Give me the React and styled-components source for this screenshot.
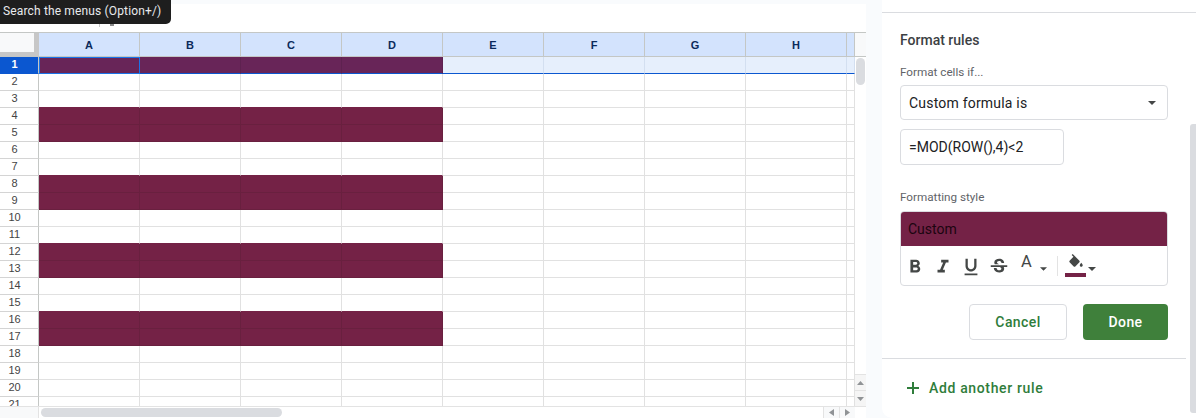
import React from "react";
import styled, { createGlobalStyle } from "styled-components";

const Global = createGlobalStyle`
  html, body { margin: 0; padding: 0; width: 1196px; height: 418px; overflow: hidden; background: #f9fbfd; }
  * { box-sizing: border-box; }
`;

const Page = styled.div`
  position: relative;
  display: flex;
  gap: 16px;
  width: 1196px;
  height: 418px;
  overflow: hidden;
  background: #f9fbfd;
  font-family: Roboto, "Liberation Sans", sans-serif;
`;

const Tooltip = styled.div`
  position: absolute;
  left: 0;
  top: 0;
  width: 171px;
  height: 24px;
  padding-left: 3px;
  background: #1e1e1e;
  border-radius: 0 0 5px 0;
  color: #e8eaed;
  font-size: 12px;
  letter-spacing: 0.15px;
  line-height: 23px;
  white-space: nowrap;
  z-index: 2;
`;

const Sheet = styled.div`
  width: 866px;
  height: 418px;
  padding-top: 4px;
  display: flex;
  flex-direction: column;
`;

const TopGap = styled.div`
  height: 28px;
  flex: none;
  display: flex;
  align-items: flex-end;
  padding: 0 0 5px 99px;
  background: #fff;
`;

const ToolbarDivider = styled.div`
  width: 1px;
  height: 22px;
  background: #c7c7c7;
`;

const ToolbarDot = styled.div`
  width: 4px;
  height: 2px;
  margin: 0 0 1px 10px;
  background: #8a8a8a;
`;

const GridWrap = styled.div`
  display: flex;
  height: 374px;
  flex: none;
  background: #fff;
`;

const Grid = styled.div`
  width: 855px;
  height: 374px;
  overflow: hidden;
  flex: none;
  font-family: "Liberation Sans", Arial, sans-serif;
`;

const HeaderRow = styled.div`
  display: flex;
  height: 25px;
  border-top: 1px solid #c4c7c5;
  border-bottom: 1px solid #c4c7c5;
`;

const Corner = styled.div`
  width: 39px;
  flex: none;
  background: #f8f9fa;
  border-right: 5px solid #c7c7c7;
  border-bottom: 4px solid #c7c7c7;
`;

const ColHead = styled.div`
  width: 101px;
  flex: none;
  display: flex;
  align-items: center;
  justify-content: center;
  background: #d3e3fd;
  border-right: 1px solid #c4c7c5;
  color: #0b2a5b;
  font-size: 11px;
  font-weight: 700;
`;

const ColEnd = styled.div`
  width: 8px;
  flex: none;
  background: #d3e3fd;
  border-right: 1px solid #c4c7c5;
`;

const Row = styled.div`
  display: flex;
  height: 17px;
`;

const RowHead = styled.div`
  width: 39px;
  flex: none;
  display: flex;
  align-items: center;
  justify-content: center;
  padding: 0 9px 2px 0;
  background: ${(p) => (p.$active ? "#0b57d0" : "#fff")};
  color: ${(p) => (p.$active ? "#fff" : "#444")};
  font-size: 11px;
  font-weight: ${(p) => (p.$active ? 700 : 400)};
  border-bottom: 1px solid ${(p) => (p.$active ? "#0b57d0" : "#d4d4d4")};
  border-right: 1px solid #c4c7c5;
`;

const Cell = styled.div`
  position: relative;
  width: ${(p) => p.$w || 101}px;
  flex: none;
  background: ${(p) => p.$bg};
  border-right: 1px solid ${(p) => p.$line};
  border-bottom: 1px solid ${(p) => p.$under};
`;

const SelectedOutline = styled.div`
  position: absolute;
  inset: 0 -1px -1px 0;
  border: 1.5px solid #1a73e8;
  pointer-events: none;
`;

const VScroll = styled.div`
  width: 11px;
  flex: none;
  background: #fff;
  display: flex;
  flex-direction: column;
  align-items: center;
`;

const VCap = styled.div`
  width: 100%;
  height: 25px;
  flex: none;
  background: #f8f9fa;
  border-top: 1px solid #c4c7c5;
  border-bottom: 1px solid #c4c7c5;
`;

const VThumb = styled.div`
  width: 9px;
  height: 27px;
  margin-top: 1px;
  border-radius: 5px;
  background: #dadce0;
  flex: none;
`;

const VArrows = styled.div`
  margin-top: auto;
  display: flex;
  flex-direction: column;
  background: #f5f5f5;
`;

const ArrowBtn = styled.div`
  width: ${(p) => p.$w || 11}px;
  height: ${(p) => p.$h || 16}px;
  display: flex;
  align-items: center;
  justify-content: center;
  border-top: ${(p) => (p.$top ? "1px solid #e3e3e3" : "0")};
  border-left: ${(p) => (p.$left ? "1px solid #e3e3e3" : "0")};
`;

const HScroll = styled.div`
  height: 12px;
  flex: none;
  display: flex;
  background: #fff;
  border-top: 1px solid #e3e3e3;
`;

const HCorner = styled.div`
  width: 39px;
  flex: none;
  background: #f8f9fa;
  border-right: 1px solid #e3e3e3;
`;

const HTrack = styled.div`
  flex: 1;
  padding: 1px 2px;
`;

const HThumb = styled.div`
  width: 241px;
  height: 9px;
  border-radius: 5px;
  background: #dadce0;
`;

const HArrows = styled.div`
  display: flex;
  margin-right: 11px;
  background: #f8f9fa;
`;

const Panel = styled.aside`
  position: relative;
  width: 314px;
  height: 418px;
  flex: none;
  background: #fff;
  border-radius: 0 0 0 10px;
  color: #3c4043;
`;

const PanelTopLine = styled.div`
  height: 13px;
  border-bottom: 1px solid #dadce0;
`;

const PanelBody = styled.div`
  padding: 19px 28px 0 18px;
  display: flex;
  flex-direction: column;
`;

const Heading = styled.div`
  font-size: 14px;
  line-height: 16px;
  font-weight: 500;
  color: #3c4043;
`;

const Label = styled.div`
  margin-top: ${(p) => p.$mt}px;
  font-size: 11.7px;
  line-height: 14px;
  color: #5f6368;
`;

const SelectBox = styled.div`
  margin-top: 6px;
  width: 268px;
  height: 35px;
  display: flex;
  align-items: center;
  justify-content: space-between;
  padding: 0 11px 0 8px;
  border: 1px solid #dadce0;
  border-radius: 4px;
  font-size: 14px;
  letter-spacing: 0.2px;
  color: #202124;
`;

const FormulaBox = styled.div`
  margin-top: 9px;
  width: 164px;
  height: 36px;
  display: flex;
  align-items: center;
  padding-left: 8px;
  border: 1px solid #dadce0;
  border-radius: 4px;
  font-size: 14px;
  color: #202124;
`;

const StyleBox = styled.div`
  margin-top: 7px;
  width: 268px;
  height: 75px;
  border: 1px solid #dadce0;
  border-radius: 4px;
  overflow: hidden;
`;

const StylePreview = styled.div`
  height: 34px;
  padding-left: 7px;
  background: #742246;
  color: #1b0510;
  font-size: 14px;
  line-height: 34px;
`;

const StyleBar = styled.div`
  height: 39px;
  display: flex;
  align-items: center;
  padding-left: 3px;
`;

const ToolIcon = styled.svg`
  width: 22px;
  height: 22px;
  fill: #444746;
  margin: 2px ${(p) => p.$mr ?? 6}px 0 0;
  flex: none;
`;

const TextA = styled.span`
  width: 11px;
  font-size: 16.5px;
  line-height: 16px;
  color: #444746;
  margin-top: -7px;
`;

const Caret = styled.svg`
  width: ${(p) => p.$w || 8}px;
  height: ${(p) => p.$h || 4}px;
  fill: ${(p) => p.$color || "#444746"};
  flex: none;
`;

const SmallCaret = styled(Caret)`
  margin: 7px 0 0 ${(p) => p.$ml}px;
`;

const BarDivider = styled.div`
  width: 1px;
  height: 20px;
  margin: 0 7px 0 10px;
  background: #e3e3e3;
`;

const FillWrap = styled.div`
  display: flex;
  flex-direction: column;
  align-items: center;
  width: 21px;
`;

const FillIcon = styled.svg`
  width: 18px;
  height: 18px;
  fill: #444746;
`;

const FillBar = styled.div`
  width: 21px;
  height: 4px;
  background: #742246;
  margin-top: 1px;
`;

const Actions = styled.div`
  margin-top: 18px;
  width: 268px;
  display: flex;
  justify-content: flex-end;
  gap: 16px;
`;

const GhostButton = styled.div`
  width: 98px;
  height: 36px;
  display: flex;
  align-items: center;
  justify-content: center;
  border: 1px solid #dadce0;
  border-radius: 4px;
  color: #2f7d3b;
  font-size: 14px;
  font-weight: 500;
  letter-spacing: 0.4px;
`;

const DoneButton = styled(GhostButton)`
  width: 85px;
  border: 0;
  background: #3f803b;
  color: #fff;
`;

const Divider = styled.div`
  margin: 18px 0 0 -18px;
  height: 1px;
  background: #dadce0;
  width: 304px;
`;

const AddRule = styled.div`
  margin: 20px 0 0 7px;
  display: flex;
  align-items: center;
  gap: 10px;
  font-size: 14px;
  font-weight: 500;
  line-height: 18px;
  letter-spacing: 0.65px;
  color: #2f7d3b;
`;

const PlusIcon = styled.svg`
  width: 12px;
  height: 12px;
  fill: #2f7d3b;
`;

const PanelScroll = styled.div`
  position: absolute;
  right: 0;
  top: 124px;
  bottom: 5px;
  width: 6px;
  border-radius: 3px 0 0 3px;
  background: #dadce0;
`;

const cols = ["A", "B", "C", "D", "E", "F", "G", "H"];
const rows = Array.from({ length: 21 }, (_, i) => i + 1);

const isFormatted = (row, col) => col < 4 && row <= 17 && row % 4 < 2;

function cellProps(row, col) {
  const fmt = isFormatted(row, col);
  if (row === 1) {
    return fmt
      ? { $bg: "#682558", $line: "#5e2250", $under: "#0b57d0" }
      : { $bg: "#e6effc", $line: "#d3dff0", $under: "#0b57d0" };
  }
  if (fmt) {
    return { $bg: "#742246", $line: "#69203f", $under: "#69203f" };
  }
  return { $bg: "#fff", $line: "#e1e1e1", $under: isFormatted(row + 1, col) ? "#742246" : "#e1e1e1" };
}

const Tri = ({ dir }) => {
  const points = {
    up: "0,5 4,0 8,5",
    down: "0,0 8,0 4,5",
    left: "6,0 6,8 0,4",
    right: "0,0 0,8 6,4",
  }[dir];
  const horizontal = dir === "left" || dir === "right";
  return (
    <Caret $w={horizontal ? 5 : 7} $h={horizontal ? 7 : 4} $color="#909396" viewBox={horizontal ? "0 0 6 8" : "0 0 8 5"} preserveAspectRatio="none">
      <polygon points={points} />
    </Caret>
  );
};

export default function App() {
  return (
    <Page>
      <Global />
      <Tooltip>Search the menus (Option+/)</Tooltip>
      <Sheet>
        <TopGap>
          <ToolbarDivider />
          <ToolbarDot />
        </TopGap>
        <GridWrap>
          <Grid>
            <HeaderRow>
              <Corner />
              {cols.map((c) => (
                <ColHead key={c}>{c}</ColHead>
              ))}
              <ColEnd />
            </HeaderRow>
            {rows.map((r) => (
              <Row key={r}>
                <RowHead $active={r === 1}>{r}</RowHead>
                {cols.map((c, i) => (
                  <Cell key={c} {...cellProps(r, i)}>
                    {r === 1 && i === 0 && <SelectedOutline />}
                  </Cell>
                ))}
                <Cell $w={8} {...cellProps(r, 8)} />
              </Row>
            ))}
          </Grid>
          <VScroll>
            <VCap />
            <VThumb />
            <VArrows>
              <ArrowBtn $top>
                <Tri dir="up" />
              </ArrowBtn>
              <ArrowBtn $top>
                <Tri dir="down" />
              </ArrowBtn>
            </VArrows>
          </VScroll>
        </GridWrap>
        <HScroll>
          <HCorner />
          <HTrack>
            <HThumb />
          </HTrack>
          <HArrows>
            <ArrowBtn $left $w={16} $h={11}>
              <Tri dir="left" />
            </ArrowBtn>
            <ArrowBtn $left $w={16} $h={11}>
              <Tri dir="right" />
            </ArrowBtn>
          </HArrows>
        </HScroll>
      </Sheet>
      <Panel>
        <PanelTopLine />
        <PanelBody>
          <Heading>Format rules</Heading>
          <Label $mt={17}>Format cells if...</Label>
          <SelectBox>
            Custom formula is
            <Caret $w={8} $h={4} viewBox="0 0 8 4">
              <polygon points="0,0 8,0 4,4" />
            </Caret>
          </SelectBox>
          <FormulaBox>=MOD(ROW(),4)&lt;2</FormulaBox>
          <Label $mt={25}>Formatting style</Label>
          <StyleBox>
            <StylePreview>Custom</StylePreview>
            <StyleBar>
              <ToolIcon viewBox="0 0 24 24">
                <path d="M15.6 10.79c.97-.67 1.65-1.77 1.65-2.79 0-2.26-1.75-4-4-4H7v14h7.04c2.09 0 3.71-1.7 3.71-3.79 0-1.52-.86-2.82-2.15-3.42zM10 6.5h3c.83 0 1.5.67 1.5 1.5s-.67 1.5-1.5 1.5h-3v-3zm3.5 9H10v-3h3.5c.83 0 1.5.67 1.5 1.5s-.67 1.5-1.5 1.5z" />
              </ToolIcon>
              <ToolIcon viewBox="0 0 24 24">
                <path d="M10 4v3h2.21l-3.42 8H6v3h8v-3h-2.21l3.42-8H18V4z" />
              </ToolIcon>
              <ToolIcon viewBox="0 0 24 24">
                <path d="M12 17c3.31 0 6-2.69 6-6V3h-2.5v8c0 1.93-1.57 3.5-3.5 3.5S8.5 12.93 8.5 11V3H6v8c0 3.31 2.69 6 6 6zm-7 2v2h14v-2H5z" />
              </ToolIcon>
              <ToolIcon viewBox="0 0 24 24" $mr={11}>
                <path d="M6.85 7.08C6.85 4.37 9.45 3 12.24 3c1.64 0 3 .49 3.9 1.28.77.65 1.46 1.73 1.46 3.24h-3.01c0-.31-.05-.59-.15-.85-.29-.86-1.2-1.28-2.25-1.28-1.86 0-2.34 1.02-2.34 1.7 0 .48.25.88.74 1.21.38.25.77.48 1.41.7H7.39c-.21-.34-.54-.89-.54-1.92zM21 12v-2H3v2h9.62c1.15.45 1.96.75 1.96 1.97 0 1-.81 1.67-2.28 1.67-1.54 0-2.93-.54-2.93-2.51H6.4c0 .55.08 1.13.24 1.58.81 2.29 3.29 3.3 5.67 3.3 2.27 0 5.3-.89 5.3-4.05 0-.3-.01-1.16-.48-1.94H21V12z" />
              </ToolIcon>
              <TextA>A</TextA>
              <SmallCaret $ml={8} $w={7} $h={4} viewBox="0 0 8 4">
                <polygon points="0,0 8,0 4,4" />
              </SmallCaret>
              <BarDivider />
              <FillWrap>
                <FillIcon viewBox="0 0 24 24">
                  <path d="M16.56 8.94L7.62 0 6.21 1.41l2.38 2.38-5.15 5.15c-.59.59-.59 1.54 0 2.12l5.5 5.5c.29.29.68.44 1.06.44s.77-.15 1.06-.44l5.5-5.5c.59-.58.59-1.53 0-2.12zM19 11.5s-2 2.17-2 3.5c0 1.1.9 2 2 2s2-.9 2-2c0-1.33-2-3.5-2-3.5z" />
                </FillIcon>
                <FillBar />
              </FillWrap>
              <SmallCaret $ml={2} $w={8} $h={4} viewBox="0 0 8 4">
                <polygon points="0,0 8,0 4,4" />
              </SmallCaret>
            </StyleBar>
          </StyleBox>
          <Actions>
            <GhostButton>Cancel</GhostButton>
            <DoneButton>Done</DoneButton>
          </Actions>
          <Divider />
          <AddRule>
            <PlusIcon viewBox="0 0 12 12">
              <path d="M5 0h2v5h5v2H7v5H5V7H0V5h5z" />
            </PlusIcon>
            Add another rule
          </AddRule>
        </PanelBody>
        <PanelScroll />
      </Panel>
    </Page>
  );
}
